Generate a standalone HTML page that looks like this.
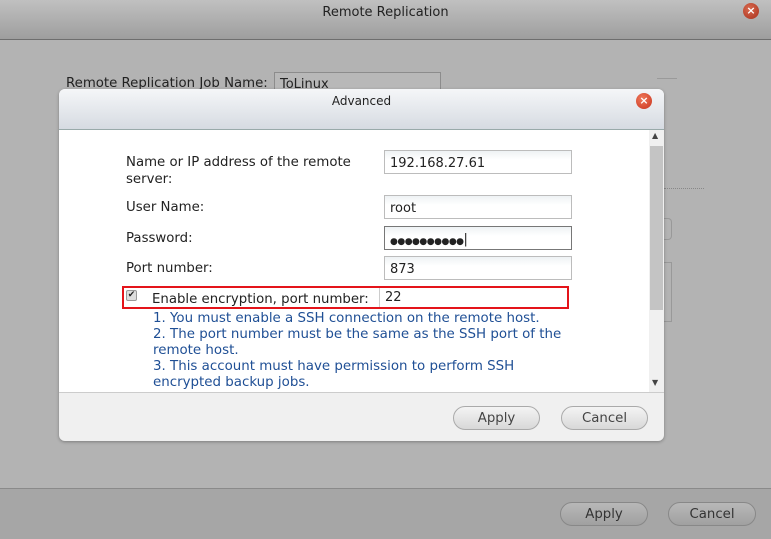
<!DOCTYPE html><html><head><style>
*{box-sizing:border-box;margin:0;padding:0}
body{width:771px;height:539px;overflow:hidden;background:#b3b3b3;font-family:"DejaVu Sans","Liberation Sans",sans-serif;font-size:13px;color:#222;position:relative}
.abs{position:absolute}
.inp{position:absolute;background:linear-gradient(#eef2f4,#fff 40%);border:1px solid #bcbcbc;font-size:13px;padding:5px 5px 0;height:24px}
.btn{position:absolute;height:24px;border-radius:12px;border:1px solid #aaa;background:linear-gradient(#f4f4f4,#d8d8d8);text-align:center;line-height:24px;font-size:13.3px;color:#444}
.close{position:absolute;width:16px;height:16px;border-radius:50%;background:radial-gradient(circle at 40% 35%,#f07a5c,#c8321c);color:#fff;font-size:11px;font-weight:bold;text-align:center;line-height:16px}
</style></head><body>
<div class="abs" style="left:0;top:0;width:771px;height:40px;background:linear-gradient(#c0c0c0,#9e9e9e);border-bottom:1px solid #6e6e6e"></div>
<div class="abs" style="left:0;top:5px;width:771px;text-align:center;color:#222">Remote Replication</div>
<div class="close" style="left:743px;top:3px;background:radial-gradient(circle at 40% 35%,#d86a50,#a8301c)">×</div>
<div class="abs" style="left:66px;top:76px;color:#222;font-size:13.3px">Remote Replication Job Name:</div>
<div class="abs" style="left:274px;top:72px;width:167px;height:22px;background:#b8b8b8;border:1px solid #8c8c8c;padding:4px 5px">ToLinux</div>
<div class="abs" style="left:657px;top:78px;width:20px;border-top:1px solid #9a9a9a"></div>
<div class="abs" style="left:664px;top:188px;width:40px;border-top:1px dotted #888"></div>
<div class="abs" style="left:664px;top:218px;width:8px;height:22px;border:1px solid #999;border-left:none;border-radius:0 4px 4px 0"></div>
<div class="abs" style="left:664px;top:262px;width:8px;height:60px;border:1px solid #999;border-left:none"></div>
<div class="abs" style="left:0;top:488px;width:771px;height:51px;background:#a6a6a6;border-top:1px solid #8a8a8a"></div>
<div class="btn" style="left:560px;top:502px;width:88px;background:linear-gradient(#b8b8b8,#a0a0a0);border-color:#888;color:#333">Apply</div>
<div class="btn" style="left:668px;top:502px;width:88px;background:linear-gradient(#b8b8b8,#a0a0a0);border-color:#888;color:#333">Cancel</div>

<div class="abs" style="left:59px;top:89px;width:605px;height:352px;border-radius:6px;overflow:hidden;background:#f0f0f0;box-shadow:0 1px 3px rgba(0,0,0,.3)">
 <div class="abs" style="left:0;top:0;width:605px;height:41px;background:linear-gradient(#f5f6f8,#d6dbe2);border-bottom:1px solid #9aa"></div>
 <div class="abs" style="left:0;top:5px;width:605px;text-align:center;font-size:12px">Advanced</div>
 <div class="close" style="left:577px;top:4px">×</div>
 <div class="abs" style="left:0;top:41px;width:590px;height:262px;background:#fff"></div>
 <div class="abs" style="left:590px;top:41px;width:15px;height:262px;background:#f0f0f0"></div>
 <div class="abs" style="left:591px;top:57px;width:13px;height:164px;background:#c4c4c4"></div>
 <div class="abs" style="left:593px;top:42px;font-size:8px;color:#444">▲</div>
 <div class="abs" style="left:593px;top:289px;font-size:8px;color:#444">▼</div>
 <div class="abs" style="left:0;top:303px;width:605px;border-top:1px solid #ccc"></div>
 <div class="abs" style="left:67px;top:65px;line-height:17px;font-size:13.3px">Name or IP address of the remote<br>server:</div>
 <div class="abs" style="left:67px;top:111px;font-size:13.3px">User Name:</div>
 <div class="abs" style="left:67px;top:142px;font-size:13.3px">Password:</div>
 <div class="abs" style="left:67px;top:172px;font-size:13.3px">Port number:</div>
 <div class="inp" style="left:325px;top:61px;width:188px">192.168.27.61</div>
 <div class="inp" style="left:325px;top:106px;width:188px">root</div>
 <div class="inp" style="left:325px;top:137px;width:188px;border-color:#777;font-size:9px;padding-top:6px;letter-spacing:-0.5px">●●●●●●●●●●<span style="font-size:13px;position:relative;top:-1px">|</span></div>
 <div class="inp" style="left:325px;top:167px;width:188px">873</div>
 <div class="abs" style="left:63px;top:197px;width:447px;height:23px;border:2px solid #e4141a"></div>
 <div class="abs" style="left:67px;top:201px;width:11px;height:11px;border:1px solid #999;border-radius:2px;background:#ddd;font-size:9px;line-height:9px;text-align:center">✔</div>
 <div class="abs" style="left:93px;top:203px;font-size:13.3px">Enable encryption, port number:</div>
 <div class="abs" style="left:320px;top:199px;width:188px;height:19px;border-left:1px solid #ccc;padding:2px 5px">22</div>
 <div class="abs" style="left:94px;top:222px;color:#1f4f95;line-height:16px;font-size:13.4px">1. You must enable a SSH connection on the remote host.<br>2. The port number must be the same as the SSH port of the<br>remote host.<br>3. This account must have permission to perform SSH<br>encrypted backup jobs.</div>
 <div class="btn" style="left:394px;top:317px;width:87px">Apply</div>
 <div class="btn" style="left:502px;top:317px;width:87px">Cancel</div>
</div>
</body></html>
